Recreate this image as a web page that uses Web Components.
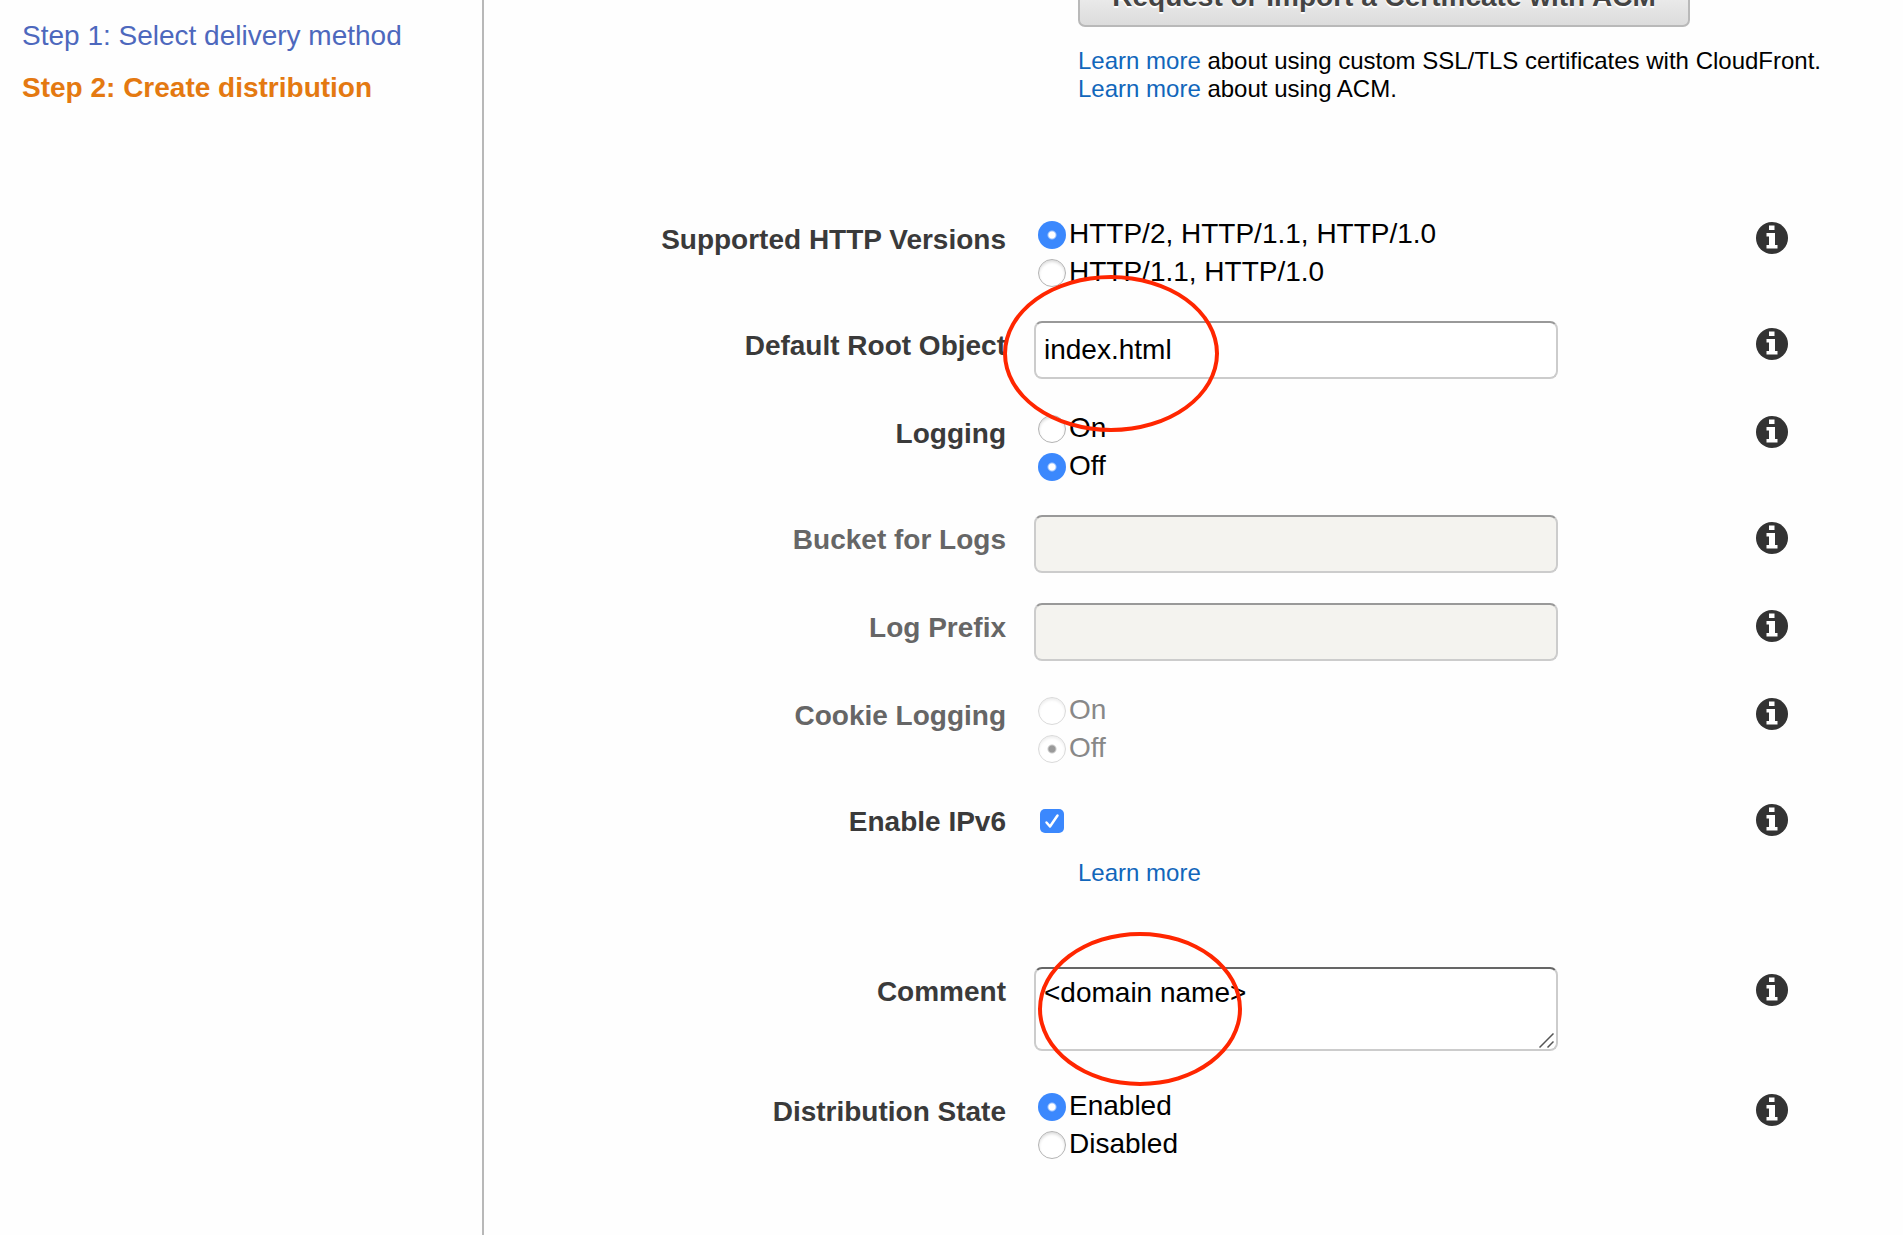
<!DOCTYPE html>
<html lang="en">
<head>
<meta charset="utf-8">
<title>Create distribution</title>
<style>
  html, body { height: 100%; }
  body { margin: 0; background: #fefefe; color: #000; font-family: "Liberation Sans", Arial, sans-serif; font-size: 28px; overflow: hidden; }
</style>
</head>
<body>
<wizard-page>
  <step-list slot="nav"></step-list>
  <certificate-notes></certificate-notes>
  <radio-field label="Supported HTTP Versions" name="http" options="HTTP/2, HTTP/1.1, HTTP/1.0|HTTP/1.1, HTTP/1.0" selected="0"></radio-field>
  <text-field label="Default Root Object" value="index.html">
    <ring-mark slot="mark" style="--x:-31px;--y:-46px;--w:216px;--h:157px"></ring-mark>
  </text-field>
  <radio-field label="Logging" name="logging" options="On|Off" selected="1"></radio-field>
  <text-field label="Bucket for Logs" disabled></text-field>
  <text-field label="Log Prefix" disabled></text-field>
  <radio-field label="Cookie Logging" name="cookies" options="On|Off" selected="1" disabled></radio-field>
  <check-field label="Enable IPv6"></check-field>
  <comment-field label="Comment" value="&lt;domain name&gt;">
    <ring-mark slot="mark" style="--x:4px;--y:-35px;--w:204px;--h:154px"></ring-mark>
  </comment-field>
  <radio-field label="Distribution State" name="state" options="Enabled|Disabled" selected="0"></radio-field>
</wizard-page>

<script>
const esc = s => (s || '').replace(/&/g, '&amp;').replace(/</g, '&lt;').replace(/>/g, '&gt;').replace(/"/g, '&quot;');

class Base extends HTMLElement {
  connectedCallback() {
    if (!this.shadowRoot) this.attachShadow({ mode: 'open' }).innerHTML = this.render();
  }
}

customElements.define('wizard-page', class extends Base {
  render() {
    return `<style>
      :host { display: flex; min-height: 100%; }
      nav { flex: 0 0 482px; box-sizing: border-box; padding: 10px 22px; }
      main { flex: 1; min-width: 0; border-left: 2px solid #b8b8b8; }
    </style>
    <nav aria-label="Steps"><slot name="nav"></slot></nav>
    <main><slot></slot></main>`;
  }
});

customElements.define('step-list', class extends Base {
  render() {
    return `<style>
      :host { display: block; line-height: 52px; }
      ol { margin: 0; padding: 0; list-style: none; }
      a { color: #4d68bd; text-decoration: none; }
      .now { color: #e47911; font-weight: bold; }
    </style>
    <ol><li><a href="#method">Step 1: Select delivery method</a></li>
    <li class="now" aria-current="step">Step 2: Create distribution</li></ol>`;
  }
});

customElements.define('certificate-notes', class extends Base {
  render() {
    return `<style>
      :host { display: block; margin: -33px 0 97px; padding-left: 594px; }
      button { display: block; box-sizing: border-box; height: 60px; min-width: 612px; padding: 0 28px; border: 2px solid #b9b9b9; border-radius: 7px;
        background: linear-gradient(#fafafa, #dcdcdc); color: #444; font: bold 28px "Liberation Sans", Arial, sans-serif; text-shadow: 0 2px 1px #fff; white-space: nowrap; }
      p { margin: 20px 0 0; font-size: 24px; line-height: 28px; }
      a { color: #1166bb; text-decoration: none; }
    </style>
    <button type="button">Request or Import a Certificate with ACM</button>
    <p><a href="#ssl">Learn more</a> about using custom SSL/TLS certificates with CloudFront.<br>
    <a href="#acm">Learn more</a> about using ACM.</p>`;
  }
});

customElements.define('ring-mark', class extends Base {
  render() {
    return `<style>
      :host { position: absolute; left: var(--x); top: var(--y); width: var(--w); height: var(--h);
        box-sizing: border-box; border: 4px solid #ff2600; border-radius: 50%; pointer-events: none; z-index: 2; }
    </style>`;
  }
});

customElements.define('info-button', class extends Base {
  render() {
    return `<style>
      :host { display: block; }
      button { display: block; padding: 0; border: 0; background: none; }
      svg { display: block; }
    </style>
    <button type="button" aria-label="Help"><svg width="32" height="32" viewBox="0 0 32 32">
      <circle cx="16" cy="16" r="16" fill="#333"/>
      <path fill="#fff" d="M13 3.500h5.500v4.500H13zM10.500 11h8.500v12h2.500v3.500h-11V23H13v-8.500h-2.500z"/>
    </svg></button>`;
  }
});

/* Shared row: right-aligned label, control column, help button. */
class Field extends Base {
  get off() { return this.hasAttribute('disabled') ? 'disabled' : ''; }
  render() {
    const label = esc(this.getAttribute('label'));
    const tag = this.group ? 'span' : 'label';
    return `<style>
      :host { display: grid; grid-template-columns: 522px minmax(0, 1fr) 32px; padding: 15px 115px 15px 0; }
      .label { padding-top: 8px; text-align: right; font-weight: bold; line-height: 34px; color: #3a3a3a; }
      :host([disabled]) .label { color: #666; }
      .control { position: relative; margin-left: 28px; min-width: 0; }
      info-button { margin-top: 7px; }
      input, textarea { display: block; box-sizing: border-box; margin: 0; font: inherit; color: #000; }
      .box { width: 100%; max-width: 524px; border: 2px solid #ccc; border-top-color: #999; border-radius: 8px; background: #fff; outline: 0; }
      [type=radio] { appearance: none; flex: none; width: 28px; height: 28px; margin-top: 2px; border: 1px solid #b4b4b4; border-radius: 50%;
        background: #fff; box-shadow: inset 0 2px 3px #ddd; }
      [type=radio]:checked { border: 0; background: radial-gradient(circle, #fff 3px, #3b88fd 5px); box-shadow: none; }
      [type=radio]:disabled { border: 1px solid #dadada; background: #fff; box-shadow: inset 0 2px 3px #eee; }
      [type=radio]:disabled:checked { background: radial-gradient(circle, #999 3px, #fff 5px); }
      ${this.css || ''}
    </style>
    <${tag} class="label" id="l" ${this.group ? '' : 'for="c"'}>${label}</${tag}>
    <div class="control">${this.control()}<slot name="mark"></slot></div>
    <info-button></info-button>`;
  }
}

customElements.define('text-field', class extends Field {
  css = `.box { height: 58px; padding: 0 8px; } .box:disabled { background: #f4f3ef; }`;
  control() { return `<input class="box" id="c" type="text" value="${esc(this.getAttribute('value'))}" ${this.off}>`; }
});

customElements.define('comment-field', class extends Field {
  css = `:host { padding-bottom: 21px; }
    .wrap { position: relative; max-width: 524px; }
    textarea.box { height: 84px; padding: 7px 8px; line-height: 34px; resize: none; overflow: hidden; border-top-color: #666; }
    svg { position: absolute; right: 4px; bottom: 3px; pointer-events: none; }`;
  control() {
    return `<div class="wrap"><textarea class="box" id="c">${esc(this.getAttribute('value'))}</textarea>
      <svg width="15" height="15" viewBox="0 0 15 15" fill="none" stroke="#555" stroke-width="1.500"><path d="M0.500 14.500 14.500 0.500M8.500 14.500 14.500 8.500"/></svg></div>`;
  }
});

customElements.define('radio-field', class extends Field {
  group = true;
  css = `[role=radiogroup] { margin-left: 4px; }
    [role=radiogroup] label { display: flex; align-items: center; gap: 3px; width: max-content; line-height: 38px; height: 38px; }
    :host([disabled]) label { color: #888; }`;
  control() {
    const on = +this.getAttribute('selected');
    return `<div role="radiogroup" aria-labelledby="l">` + this.getAttribute('options').split('|').map((o, i) =>
      `<label><input type="radio" name="${this.getAttribute('name')}" ${i === on ? 'checked' : ''} ${this.off}>${esc(o)}</label>`).join('') + `</div>`;
  }
});

customElements.define('check-field', class extends Field {
  css = `.control { padding: 12px 0 50px; }
    .tick { display: grid; width: 24px; margin-left: 6px; }
    .tick > * { grid-area: 1 / 1; }
    .tick input { appearance: none; width: 24px; height: 24px; border-radius: 5px; background: #3b88fd; }
    svg { pointer-events: none; visibility: hidden; }
    input:checked + svg { visibility: visible; }
    p { margin: 26px 0 0 44px; line-height: 28px; font-size: 24px; }
    a { color: #1166bb; text-decoration: none; }`;
  control() {
    return `<div class="tick"><input type="checkbox" id="c" checked>
      <svg width="24" height="24" viewBox="0 0 24 24" fill="none" stroke="#fff" stroke-width="2.500" stroke-linecap="round" stroke-linejoin="round"><path d="M6.500 13.500 10 17.500 17.500 6.500"/></svg></div>
      <p><a href="#ipv6">Learn more</a></p>`;
  }
});
</script>
</body>
</html>
